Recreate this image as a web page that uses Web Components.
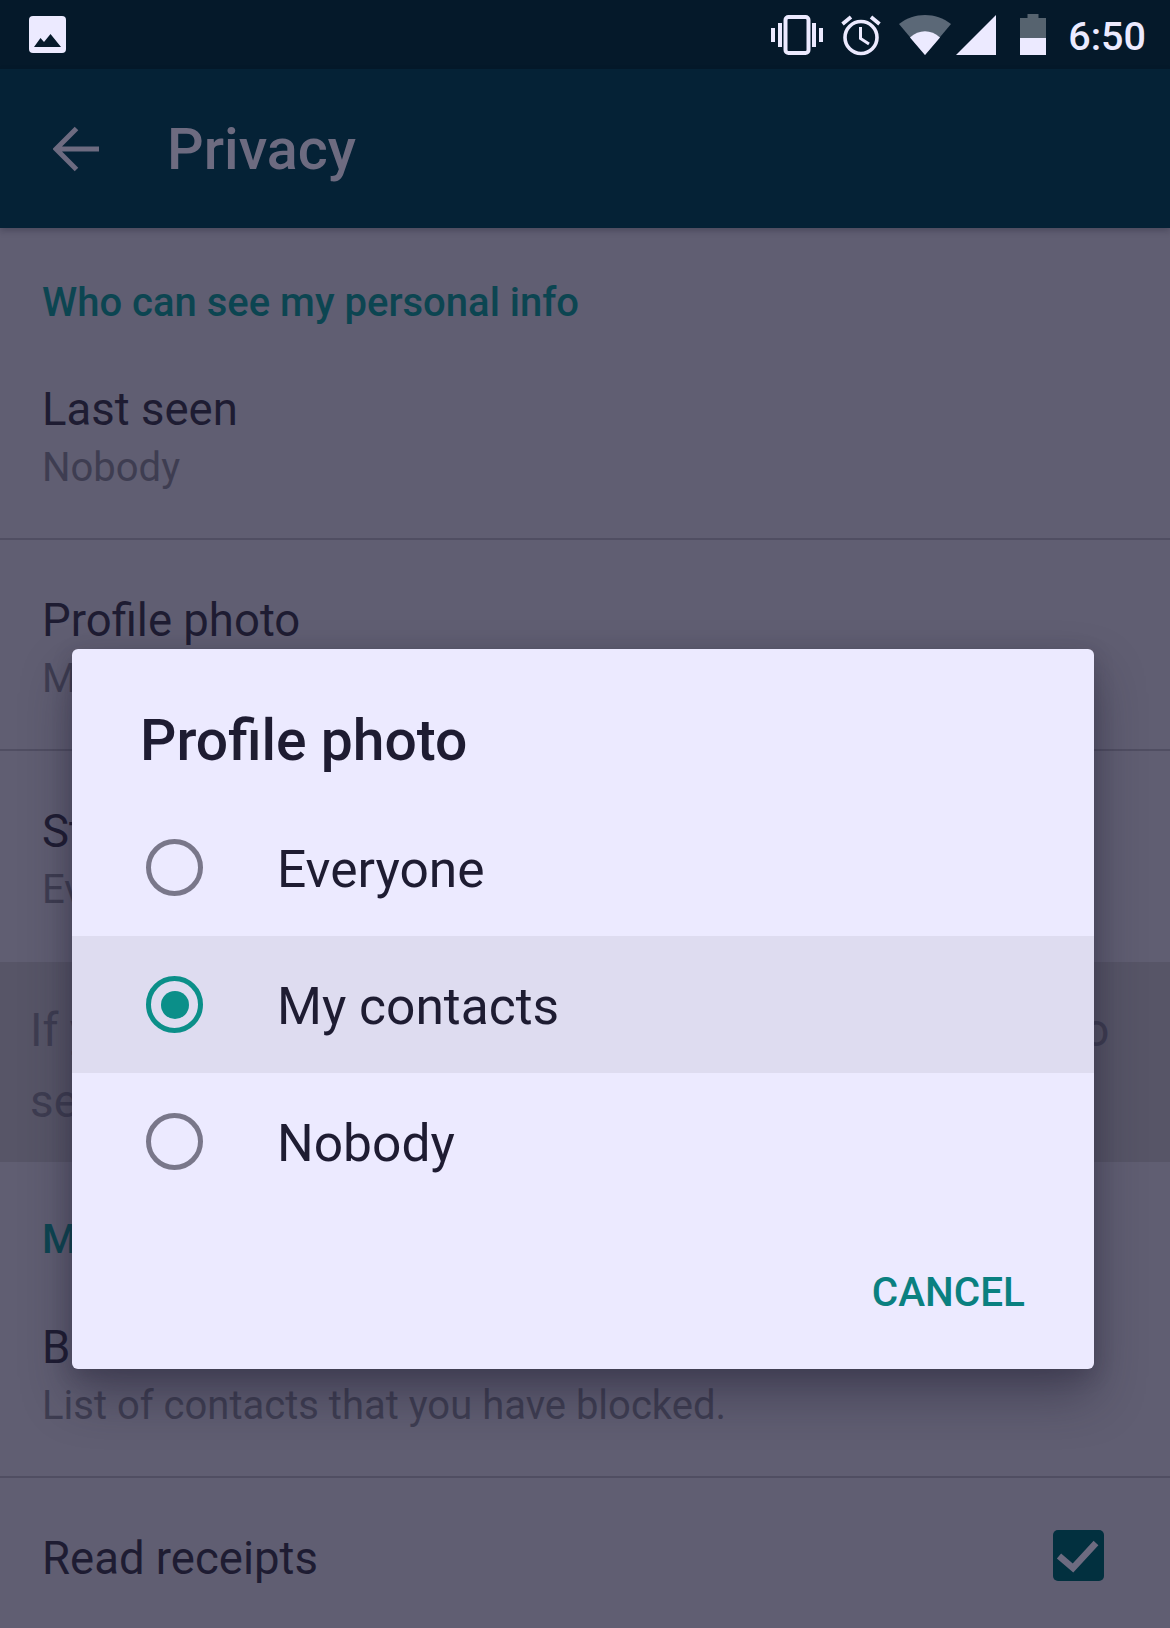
<!DOCTYPE html>
<html>
<head>
<meta charset="utf-8">
<title>Privacy</title>
<style>
  html, body { margin: 0; padding: 0; height: 100%; overflow: hidden; background: #605e72; }
  body { font-family: Roboto, "Liberation Sans", sans-serif; }
</style>
</head>
<body>
<phone-screen>
  <status-bar></status-bar>
  <app-bar>Privacy</app-bar>
  <section-head>Who can see my personal info</section-head>
  <pref-row title="Last seen" sub="Nobody"></pref-row>
  <pref-row title="Profile photo" sub="My contacts"></pref-row>
  <pref-row title="Status" sub="Everyone" last></pref-row>
  <info-band>If you don't share your Last Seen, you won't be able to<br>see other people's Last Seen.</info-band>
  <section-head tall>Messaging</section-head>
  <pref-row title="Blocked contacts" sub="List of contacts that you have blocked."></pref-row>
  <pref-row title="Read receipts" checked last></pref-row>
  <pick-dialog slot="dialog" heading="Profile photo">
    <radio-row>Everyone</radio-row>
    <radio-row selected>My contacts</radio-row>
    <radio-row>Nobody</radio-row>
  </pick-dialog>
</phone-screen>

<script>
class PhoneScreen extends HTMLElement {
  constructor() {
    super();
    this.attachShadow({ mode: "open" }).innerHTML = `
      <style>
        :host { display: block; position: relative; width: 1170px; height: 1628px; overflow: hidden; background: #605e72; }
        .list { display: flex; flex-direction: column; }
      </style>
      <div class="list"><slot></slot></div>
      <slot name="dialog"></slot>`;
  }
}

class StatusBar extends HTMLElement {
  constructor() {
    super();
    this.attachShadow({ mode: "open" }).innerHTML = `
      <style>
        :host { display: flex; align-items: center; height: 69px; padding: 0 24px 0 29px; background: #05192a; color: #eceaff; box-sizing: border-box; }
        svg { display: block; flex: none; }
        .right { margin-left: auto; display: flex; align-items: center; }
        .time { font-size: 39.500px; font-weight: 500; line-height: 69px; margin-left: 22px; padding-top: 3px; }
      </style>
      <svg width="37" height="37" viewBox="0 0 37 37">
        <rect width="37" height="37" rx="4" fill="#eceaff"/>
        <path d="M5 31 L11.5 22 L15 26 L21.5 18 L32 31 Z" fill="#061a2b"/>
      </svg>
      <div class="right">
        <svg width="52" height="40" viewBox="0 0 52 40" style="margin-right:18px">
          <rect x="14.5" y="2" width="23" height="36" rx="3" fill="none" stroke="#eceaff" stroke-width="4"/>
          <rect x="0" y="13" width="4" height="14" fill="#eceaff"/>
          <rect x="7" y="8" width="4" height="24" fill="#eceaff"/>
          <rect x="41" y="8" width="4" height="24" fill="#eceaff"/>
          <rect x="48" y="13" width="4" height="14" fill="#eceaff"/>
        </svg>
        <svg width="40" height="42" viewBox="0 0 40 42" style="margin-right:18px">
          <circle cx="20" cy="23.5" r="16" fill="none" stroke="#eceaff" stroke-width="3.6"/>
          <path d="M19.5 13 V24.5 L28 30" fill="none" stroke="#eceaff" stroke-width="3"/>
          <path d="M1.5 10 L10 3 M38.5 10 L30 3" stroke="#eceaff" stroke-width="3.8"/>
        </svg>
        <svg width="52" height="40" viewBox="0 0 52 40" style="margin-right:5px">
          <path d="M0 9 C15 -3 37 -3 52 9 L26 40 Z" fill="#5b6877"/>
          <path d="M11 22.500 C20 14 32 14 41 22.500 L26 40 Z" fill="#eceaff"/>
        </svg>
        <svg width="40" height="40" viewBox="0 0 40 40" style="margin-right:24px">
          <path d="M0 40 L40 0 V40 Z" fill="#eceaff"/>
        </svg>
        <svg width="26" height="41" viewBox="0 0 26 41">
          <path d="M0 4 H7.500 V0 H18.500 V4 H26 V24 H0 Z" fill="#56636f"/>
          <rect y="24" width="26" height="17" fill="#eceaff"/>
        </svg>
        <span class="time">6:50</span>
      </div>`;
  }
}

class AppBar extends HTMLElement {
  constructor() {
    super();
    this.attachShadow({ mode: "open" }).innerHTML = `
      <style>
        :host { display: flex; align-items: center; height: 159px; padding-left: 53px; background: #052236; color: #6d6b80; box-sizing: border-box; box-shadow: 0 3px 6px rgba(20,20,40,.25); position: relative; }
        svg { display: block; flex: none; margin-right: 68px; }
        .title { font-size: 57.500px; font-weight: 500; padding-top: 2px; }
      </style>
      <svg width="46" height="46" viewBox="0 0 46 46">
        <path d="M46 23 H4 M23.500 2.500 L3 23 L23.500 43.500" fill="none" stroke="#6d6b80" stroke-width="5"/>
      </svg>
      <span class="title"><slot></slot></span>`;
  }
}

class SectionHead extends HTMLElement {
  constructor() {
    super();
    this.attachShadow({ mode: "open" }).innerHTML = `
      <style>
        :host { display: block; box-sizing: border-box; height: 101px; padding: 51px 42px 0; line-height: 48px; font-size: 40px; font-weight: 500; color: #0c4551; }
        :host([tall]) { height: 105px; padding-top: 54px; }
      </style>
      <slot></slot>`;
  }
}

class PrefRow extends HTMLElement {
  constructor() {
    super();
    const title = this.getAttribute("title") || "";
    const sub = this.getAttribute("sub");
    this.removeAttribute("title");
    this.attachShadow({ mode: "open" }).innerHTML = `
      <style>
        :host { display: flex; align-items: flex-start; justify-content: space-between; box-sizing: border-box; padding: 0 66px 0 42px; height: 211px; border-bottom: 2px solid #504e62; }
        :host([last]) { border-bottom: none; }
        .t { font-size: 45.500px; line-height: 56px; color: #1e1c32; }
        .s { font-size: 40px; line-height: 48px; color: #3e3d51; margin-top: 6px; }
        .text { padding-top: 53px; }
        .box { width: 51px; height: 51px; border-radius: 5px; background: #02303f; margin-top: 52px; }
        svg { display: block; }
      </style>
      <div class="text">
        <div class="t">${title}</div>
        ${sub ? `<div class="s">${sub}</div>` : ""}
      </div>
      ${this.hasAttribute("checked") ? `<div class="box"><svg width="51" height="51" viewBox="0 0 51 51"><path d="M6 26 L20 38 L43 13" fill="none" stroke="#6d6b80" stroke-width="6.500"/></svg></div>` : ""}`;
  }
}

class InfoBand extends HTMLElement {
  constructor() {
    super();
    this.attachShadow({ mode: "open" }).innerHTML = `
      <style>
        :host { display: block; box-sizing: border-box; height: 200px; padding: 33px 0 0 30px; background: #575567; color: #3e3d51; font-size: 45.800px; line-height: 71px; white-space: nowrap; overflow: hidden; }
      </style>
      <slot></slot>`;
  }
}

class PickDialog extends HTMLElement {
  constructor() {
    super();
    this.attachShadow({ mode: "open" }).innerHTML = `
      <style>
        :host { display: flex; flex-direction: column; position: absolute; left: 72px; top: 649px; width: 1022px; height: 720px; border-radius: 6px; background: #eceaff; box-shadow: 0 26px 50px rgba(30,28,50,.42), 0 6px 20px rgba(30,28,50,.22); color: #1e1c32; overflow: hidden; }
        h2 { margin: 0; height: 150px; box-sizing: border-box; padding: 59px 0 0 68px; font-size: 57px; line-height: 66px; font-weight: 500; color: #1e1c32; }
        .foot { flex: 1; display: flex; justify-content: flex-end; align-items: flex-end; padding: 0 69px 54px 0; }
        .cancel { font-size: 40.500px; line-height: 46px; font-weight: 500; color: #0a8080; }
      </style>
      <h2>${this.getAttribute("heading")}</h2>
      <slot></slot>
      <div class="foot"><span class="cancel">CANCEL</span></div>`;
  }
}

class RadioRow extends HTMLElement {
  constructor() {
    super();
    this.attachShadow({ mode: "open" }).innerHTML = `
      <style>
        :host { display: flex; align-items: center; height: 137px; padding-left: 74px; font-size: 51.500px; color: #1e1c32; box-sizing: border-box; }
        :host([selected]) { background: #dedcf0; }
        .ring { flex: none; width: 57px; height: 57px; box-sizing: border-box; border: 5.500px solid #79778a; border-radius: 50%; margin-right: 74px; display: flex; align-items: center; justify-content: center; }
        :host([selected]) .ring { border-color: #0b8f89; }
        :host([selected]) .ring::after { content: ""; width: 28px; height: 28px; border-radius: 50%; background: #0b8f89; }
        .label { padding-top: 3px; }
      </style>
      <span class="ring"></span>
      <span class="label"><slot></slot></span>`;
  }
}

customElements.define("phone-screen", PhoneScreen);
customElements.define("status-bar", StatusBar);
customElements.define("app-bar", AppBar);
customElements.define("section-head", SectionHead);
customElements.define("pref-row", PrefRow);
customElements.define("info-band", InfoBand);
customElements.define("pick-dialog", PickDialog);
customElements.define("radio-row", RadioRow);
</script>
</body>
</html>
